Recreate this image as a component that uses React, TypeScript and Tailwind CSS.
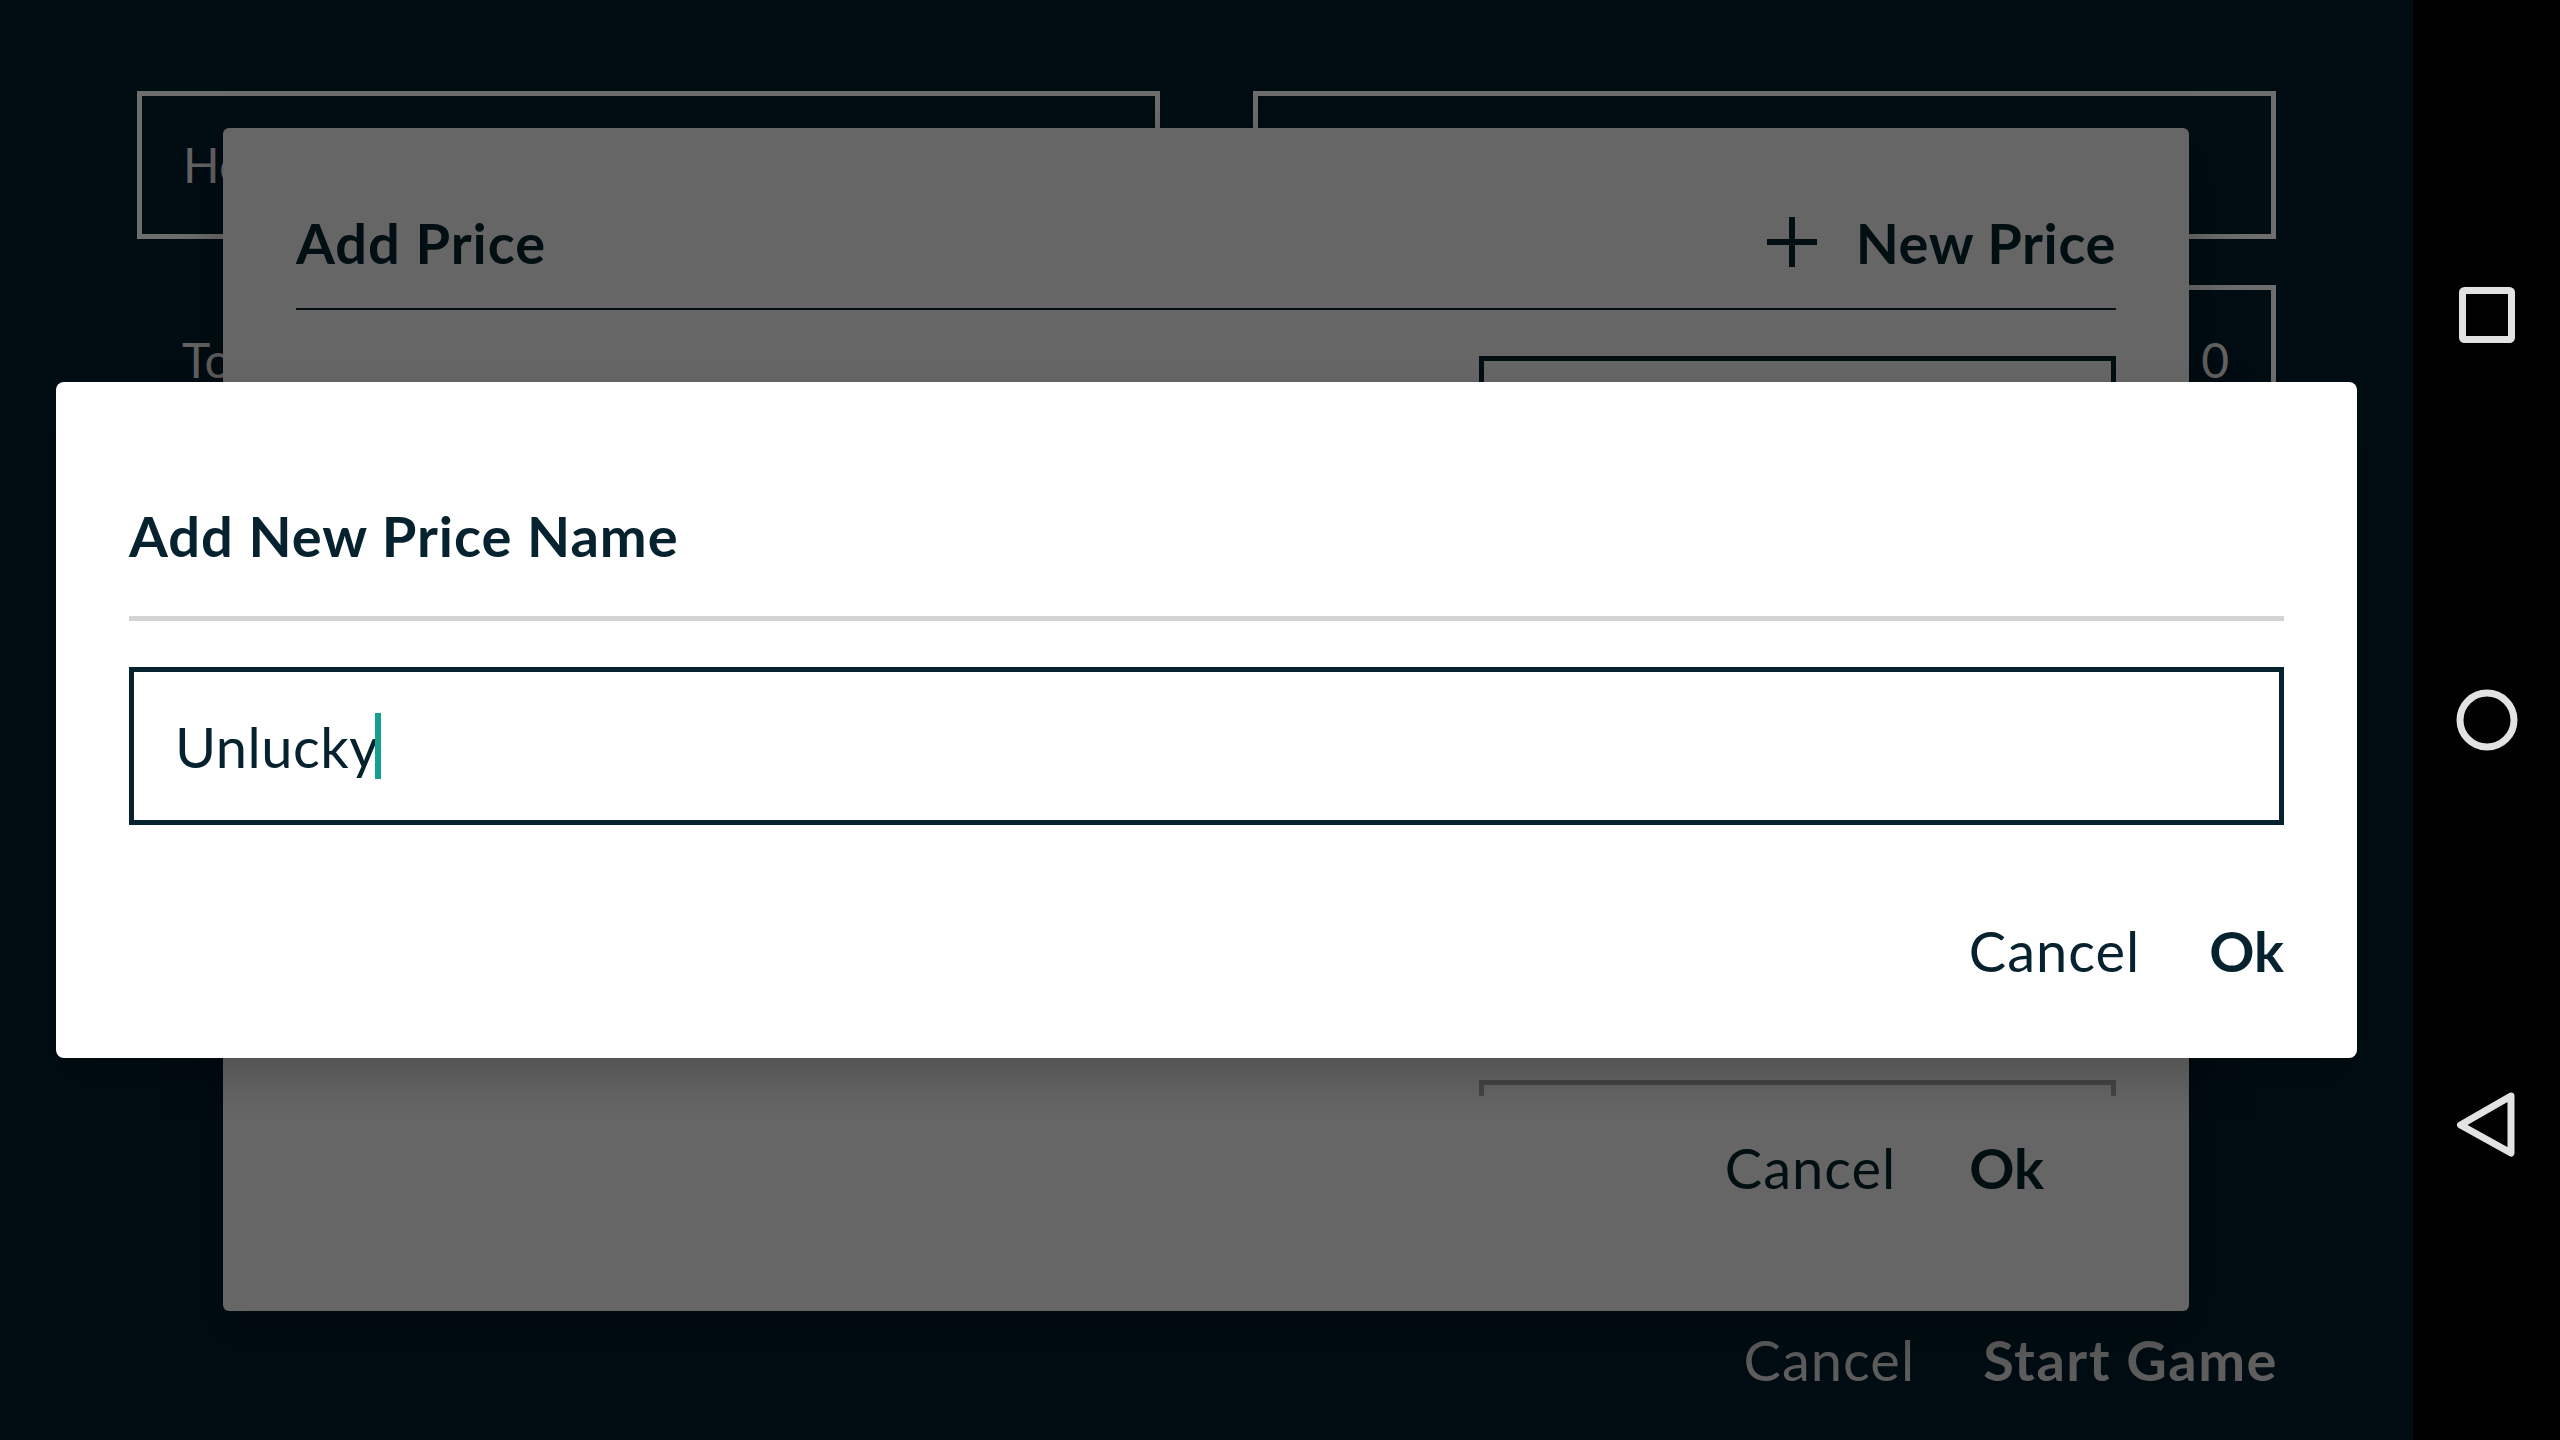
const font = "font-['Lato','Liberation_Sans',sans-serif]";

function Bar() {
  return (
    <div className="flex h-full w-[147px] shrink-0 flex-col items-center justify-between bg-black py-[283px] pl-[1px]">
      <svg width="64" height="64" viewBox="0 0 64 64" fill="none" stroke="#e2e2e2" strokeWidth="7">
        <rect x="7.5" y="7.5" width="49" height="49" rx="2" />
      </svg>
      <svg width="64" height="64" viewBox="0 0 64 64" fill="none" stroke="#e2e2e2" strokeWidth="7">
        <circle cx="32" cy="32" r="27" />
      </svg>
      <svg className="overflow-visible" width="64" height="64" viewBox="0 0 64 64" fill="none" stroke="#e2e2e2" strokeWidth="7" strokeLinejoin="round">
        <path d="M56 3 L5.5 32 L56 60 Z" />
      </svg>
    </div>
  );
}

function AddPriceDialog() {
  return (
    <div className="absolute left-[223px] top-[128px] flex h-[1183px] w-[1966px] flex-col rounded-[6px] bg-[#666666] px-[73px] pt-[87px] text-[56px] leading-[56px] text-[#010f13] shadow-[0_20px_50px_10px_rgba(0,0,0,0.25)]">
      <div className="flex items-center justify-between font-bold">
        <span className="tracking-[1px]">Add Price</span>
        <div className="flex items-center gap-[39px]">
          <svg className="-mt-[2px]" width="50" height="50" viewBox="0 0 50 50" fill="#010f13">
            <rect x="22" y="0" width="6" height="50" />
            <rect x="0" y="22" width="50" height="6" />
          </svg>
          <span className="tracking-[0.6px]">New Price</span>
        </div>
      </div>
      <div className="mt-[37px] h-[2px] bg-[#010f13]" />
      <div className="flex h-[786px] flex-col items-end overflow-hidden pt-[46px]">
        <div className="h-[148px] w-[637px] shrink-0 border-[5px] border-[#010f13]" />
        <div className="mt-[576px] h-[148px] w-[637px] shrink-0 border-[5px] border-[#454545]" />
      </div>
      <div className="mt-[44px] flex justify-end gap-[73px] pr-[72px]">
        <span className="tracking-[1px]">Cancel</span>
        <span className="font-bold">Ok</span>
      </div>
    </div>
  );
}

function PriceNameDialog() {
  return (
    <div className="absolute left-[56px] top-[382px] h-[676px] w-[2301px] rounded-[8px] bg-white px-[73px] pt-[126px] text-[56px] leading-[56px] text-[#05222e] shadow-[0_22px_44px_0_rgba(0,0,0,0.2)]">
      <div className="font-bold tracking-[1px]">Add New Price Name</div>
      <div className="mt-[52px] h-[5px] bg-[#d3d3d3]" />
      <div className="mt-[46px] flex h-[158px] items-center border-[5px] border-[#05222e] pl-[41px]">
        <span className="pt-[2px] tracking-[0.5px]">Unlucky</span>
        <span className="-ml-[4px] h-[66px] w-[6px] bg-[#16a08e]" />
      </div>
      <div className="mt-[98px] flex justify-end gap-[69px]">
        <span className="tracking-[1px]">Cancel</span>
        <span className="font-bold">Ok</span>
      </div>
    </div>
  );
}

export default function App() {
  return (
    <div className={`flex h-[1440px] w-[2560px] overflow-hidden bg-black ${font}`}>
      <div className="relative flex h-full flex-1 flex-col bg-[#010d13] pb-[52px] pl-[137px] pr-[137px] pt-[91px] text-[48px] text-[#666666]">
        <div className="grid grid-cols-2 gap-x-[93px] gap-y-[46px]">
          <div className="flex h-[148px] items-center border-[5px] border-[#6e6e6e] pl-[41px]">Host</div>
          <div className="h-[148px] border-[5px] border-[#6e6e6e]" />
          <div className="flex h-[148px] items-center pl-[45px] pt-[2px]">Total</div>
          <div className="flex h-[148px] items-center justify-end border-[5px] border-[#6e6e6e] pr-[42px] pt-[2px]">0</div>
        </div>
        <div className="mt-auto flex justify-end gap-[68px] text-[56px] leading-[56px] text-[#5f5f5f]">
          <span className="tracking-[1px]">Cancel</span>
          <span className="-mr-[2px] font-bold tracking-[1.5px]">Start Game</span>
        </div>
        <AddPriceDialog />
        <PriceNameDialog />
      </div>
      <Bar />
    </div>
  );
}
